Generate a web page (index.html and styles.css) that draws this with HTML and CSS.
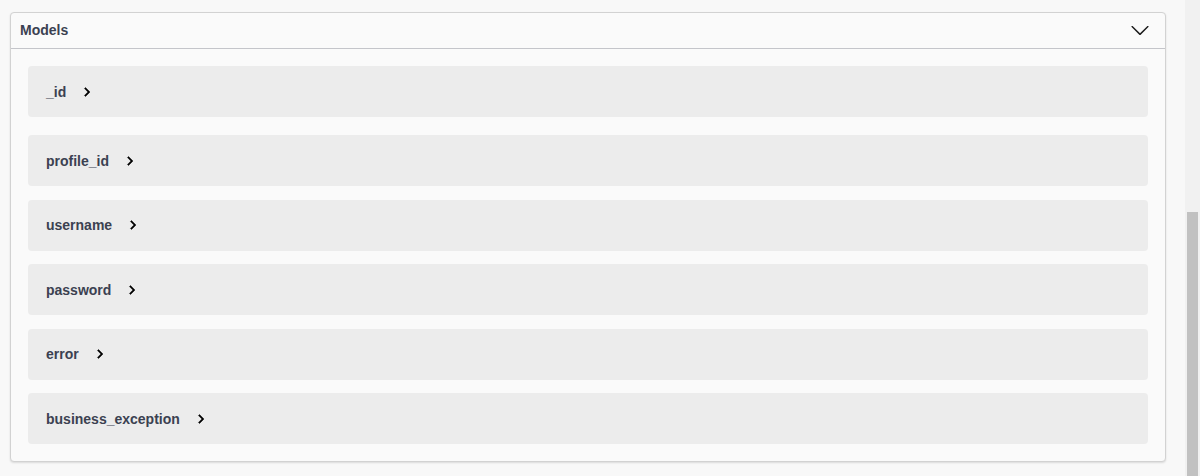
FILE: index.html
```html
<!DOCTYPE html>
<html lang="en">
<head>
  <meta charset="UTF-8"/>
  <meta name="viewport" content="width=device-width,initial-scale=1.0"/>
  <title>Models</title>
  <link rel="stylesheet" href="styles.css">
</head>
<body>

<div class="page">
  <section class="models">
    <div class="models-head">
      <h4>Models</h4>
      <svg class="head-arrow" width="20" height="20" viewBox="0 0 20 20">
        <path d="M17.418 6.109c.272-.268.709-.268.979 0s.271.701 0 .969l-7.908 7.83c-.27.268-.707.268-.979 0l-7.908-7.83c-.27-.268-.27-.701 0-.969.271-.268.709-.268.979 0L10 13.25l7.418-7.141z"/>
      </svg>
    </div>

    <div class="models-body">
      <div class="model-row">
        <span class="model-title">_id</span>
        <svg class="model-toggle" width="18" height="18" viewBox="0 0 24 24"><path d="M10 6L8.59 7.41 13.17 12l-4.58 4.59L10 18l6-6z"/></svg>
      </div>
      <div class="model-row">
        <span class="model-title">profile_id</span>
        <svg class="model-toggle" width="18" height="18" viewBox="0 0 24 24"><path d="M10 6L8.59 7.41 13.17 12l-4.58 4.59L10 18l6-6z"/></svg>
      </div>
      <div class="model-row">
        <span class="model-title">username</span>
        <svg class="model-toggle" width="18" height="18" viewBox="0 0 24 24"><path d="M10 6L8.59 7.41 13.17 12l-4.58 4.59L10 18l6-6z"/></svg>
      </div>
      <div class="model-row">
        <span class="model-title">password</span>
        <svg class="model-toggle" width="18" height="18" viewBox="0 0 24 24"><path d="M10 6L8.59 7.41 13.17 12l-4.58 4.59L10 18l6-6z"/></svg>
      </div>
      <div class="model-row">
        <span class="model-title">error</span>
        <svg class="model-toggle" width="18" height="18" viewBox="0 0 24 24"><path d="M10 6L8.59 7.41 13.17 12l-4.58 4.59L10 18l6-6z"/></svg>
      </div>
      <div class="model-row">
        <span class="model-title">business_exception</span>
        <svg class="model-toggle" width="18" height="18" viewBox="0 0 24 24"><path d="M10 6L8.59 7.41 13.17 12l-4.58 4.59L10 18l6-6z"/></svg>
      </div>
    </div>
  </section>
</div>

<div class="scrollbar">
  <div class="scroll-thumb"></div>
</div>

</body>
</html>
```

FILE: styles.css
```css
* {
  margin: 0;
  padding: 0;
  box-sizing: border-box;
}

body {
  display: flex;
  height: 476px;
  overflow: hidden;
  background: #f8f8f8;
  font-family: "Liberation Sans", Arial, sans-serif;
  color: #3b4151;
}

.page {
  flex: 1;
  padding: 12px 19px 0 10px;
}

.models {
  background: #fafafa;
  border: 1px solid #d2d2d2;
  border-radius: 4px;
  box-shadow: 0 1px 2px rgba(0, 0, 0, 0.12);
}

.models-head {
  display: flex;
  align-items: center;
  justify-content: space-between;
  height: 36px;
  padding: 0 15px 1px 9px;
  border-bottom: 1px solid #c4c5ca;
}

.models-head h4 {
  font-size: 14px;
  font-weight: bold;
  color: #3b4151;
}

.head-arrow {
  fill: #1b1b1b;
}

.models-body {
  display: flex;
  flex-direction: column;
  gap: 13.5px;
  padding: 17px 17px 17px;
}

.model-row {
  display: flex;
  align-items: center;
  height: 51px;
  flex-shrink: 0;
  padding-left: 18px;
  background: #ececec;
  border-radius: 4px;
}

.model-row:first-child {
  margin-bottom: 4.5px;
}

.model-title {
  font-size: 14px;
  font-weight: bold;
  color: #3b4151;
}

.model-toggle {
  margin-left: 12px;
  fill: #000;
  stroke: #000;
  stroke-width: 0.6;
}

.scrollbar {
  width: 15px;
  display: flex;
  flex-direction: column;
  justify-content: flex-end;
  background: #f1f1f1;
}

.scroll-thumb {
  height: 264px;
  margin: 0 2px;
  background: #c1c1c1;
}
```
